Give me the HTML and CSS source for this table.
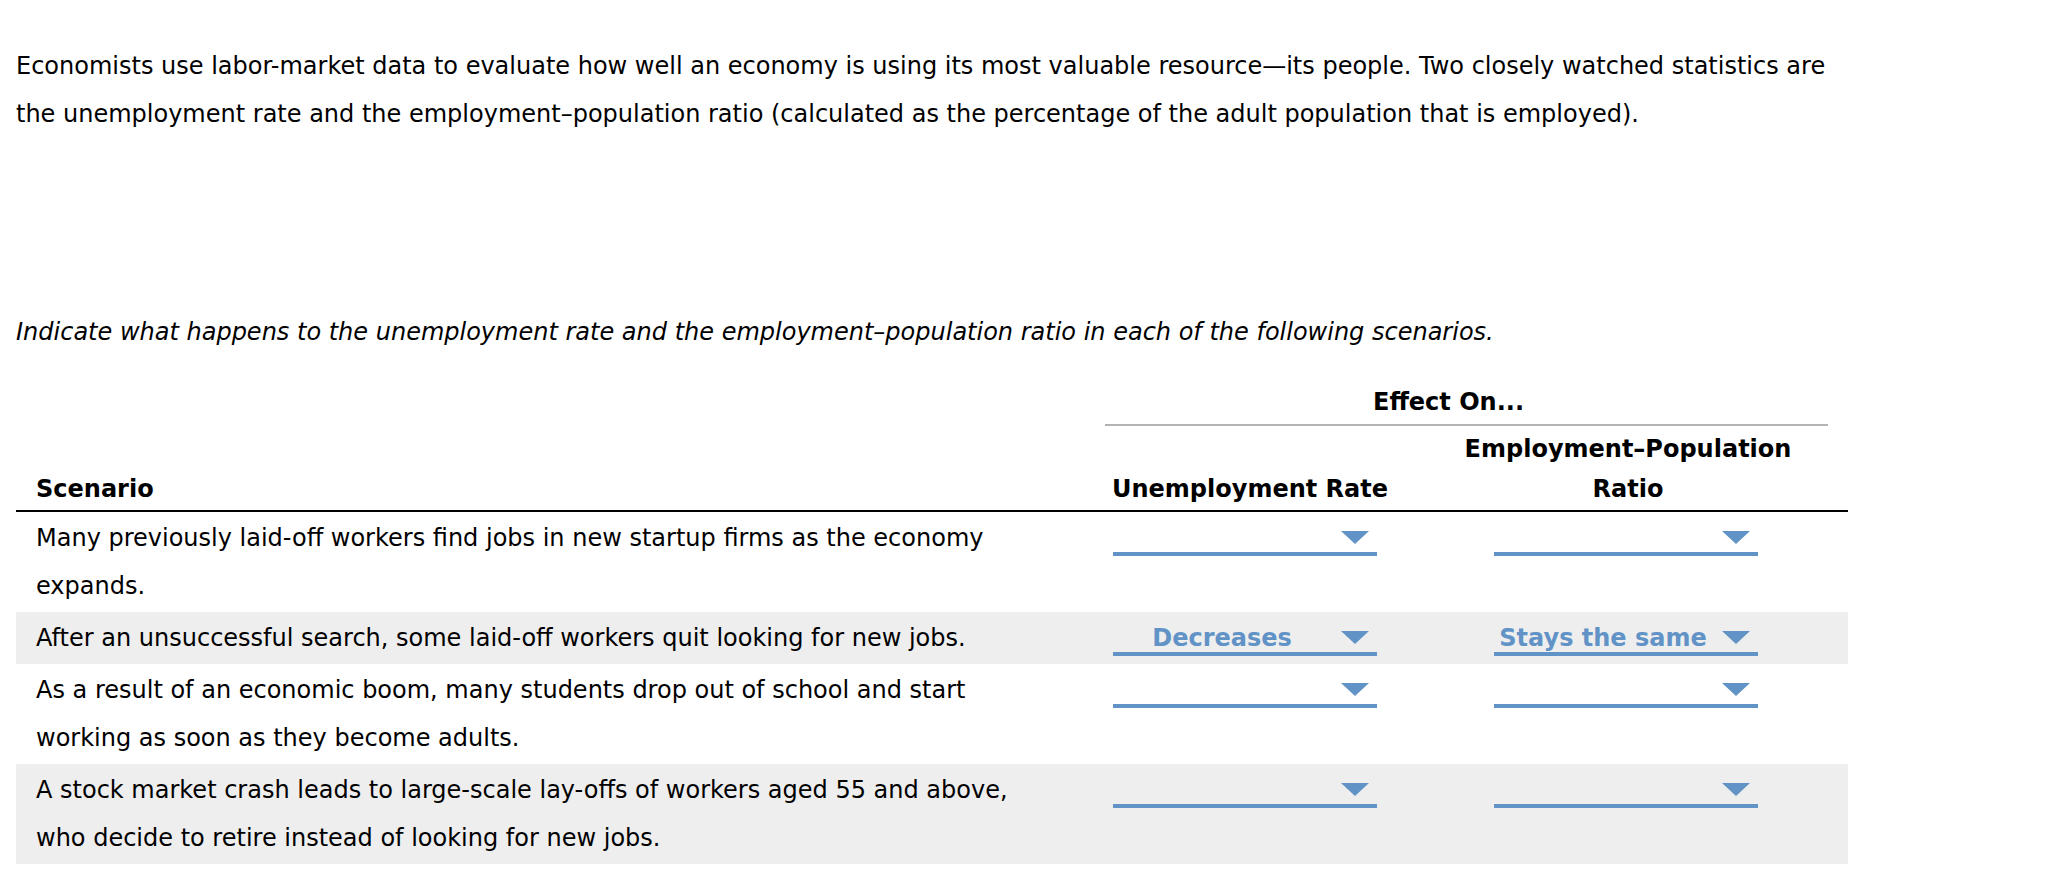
FILE: index.html
```html
<!DOCTYPE html>
<html lang="en">
<head>
<meta charset="utf-8">
<title>Labor market statistics</title>
<link rel="stylesheet" href="styles.css">
</head>
<body>
<div class="page">
  <p class="intro">Economists use labor-market data to evaluate how well an economy is using its most valuable resource—its people. Two closely watched statistics are the unemployment rate and the employment–population ratio (calculated as the percentage of the adult population that is employed).</p>
  <p class="prompt">Indicate what happens to the unemployment rate and the employment–population ratio in each of the following scenarios.</p>

  <div class="table">
    <div class="hrow1">
      <div class="spacer"></div>
      <div class="effect">Effect On...</div>
    </div>
    <div class="hrow2">
      <div class="th c1">Scenario</div>
      <div class="th c2">Unemployment Rate</div>
      <div class="th c3">Employment–Population<br>Ratio</div>
    </div>

    <div class="row">
      <div class="cell c1">Many previously laid-off workers find jobs in new startup firms as the economy expands.</div>
      <div class="cell c2"><span class="dd"><span class="val">&nbsp;</span></span></div>
      <div class="cell c3"><span class="dd"><span class="val">&nbsp;</span></span></div>
    </div>
    <div class="row alt">
      <div class="cell c1">After an unsuccessful search, some laid-off workers quit looking for new jobs.</div>
      <div class="cell c2"><span class="dd"><span class="val">Decreases</span></span></div>
      <div class="cell c3"><span class="dd"><span class="val">Stays the same</span></span></div>
    </div>
    <div class="row">
      <div class="cell c1">As a result of an economic boom, many students drop out of school and start working as soon as they become adults.</div>
      <div class="cell c2"><span class="dd"><span class="val">&nbsp;</span></span></div>
      <div class="cell c3"><span class="dd"><span class="val">&nbsp;</span></span></div>
    </div>
    <div class="row alt">
      <div class="cell c1">A stock market crash leads to large-scale lay-offs of workers aged 55 and above, who decide to retire instead of looking for new jobs.</div>
      <div class="cell c2"><span class="dd"><span class="val">&nbsp;</span></span></div>
      <div class="cell c3"><span class="dd"><span class="val">&nbsp;</span></span></div>
    </div>
  </div>
</div>
</body>
</html>
```

FILE: styles.css
```css
html, body {
  margin: 0;
  padding: 0;
  background: #ffffff;
}

body {
  font-family: "DejaVu Sans", Verdana, sans-serif;
  font-size: 24px;
  color: #000000;
}

.page {
  padding: 42px 0 0 16px;
  width: 1832px;
}

.intro {
  margin: 0;
  line-height: 48px;
}

.prompt {
  margin: 170px 0 0 0;
  line-height: 48px;
  font-style: italic;
}

.table {
  margin-top: 26px;
  width: 1832px;
}

.hrow1,
.hrow2,
.row {
  display: grid;
  grid-template-columns: 1089px 289px 454px;
}

.hrow1 {
  line-height: 40px;
  font-weight: bold;
}

.effect {
  grid-column: 2 / 4;
  text-align: center;
  padding: 0 36px 2px 0;
  margin-right: 20px;
  border-bottom: 2px solid #b3b3b3;
}

.hrow2 {
  line-height: 40px;
  font-weight: bold;
  padding: 3px 0 1px 0;
  border-bottom: 2px solid #000000;
}

.th {
  align-self: end;
}

.th.c1 {
  padding-left: 20px;
}

.th.c2 {
  padding-left: 7px;
}

.th.c3 {
  text-align: center;
  padding: 0 16px 0 30px;
}

.row {
  line-height: 48px;
}

.row.alt {
  background: #eeeeee;
}

.cell {
  padding: 2px 0;
}

.cell.c1 {
  padding: 2px 50px 2px 20px;
}

.cell.c2 {
  padding-left: 8px;
}

.cell.c3 {
  padding-left: 100px;
}

.dd {
  display: inline-block;
  position: relative;
  width: 264px;
  box-sizing: border-box;
  line-height: 28px;
  padding-right: 46px;
  text-align: center;
  border-bottom: 4px solid #6193c6;
  color: #6193c6;
  font-weight: bold;
  vertical-align: baseline;
  white-space: nowrap;
}

.dd::after {
  content: "";
  position: absolute;
  right: 8px;
  top: 7px;
  width: 0;
  height: 0;
  border-left: 14px solid transparent;
  border-right: 14px solid transparent;
  border-top: 13px solid #6193c6;
}
```
